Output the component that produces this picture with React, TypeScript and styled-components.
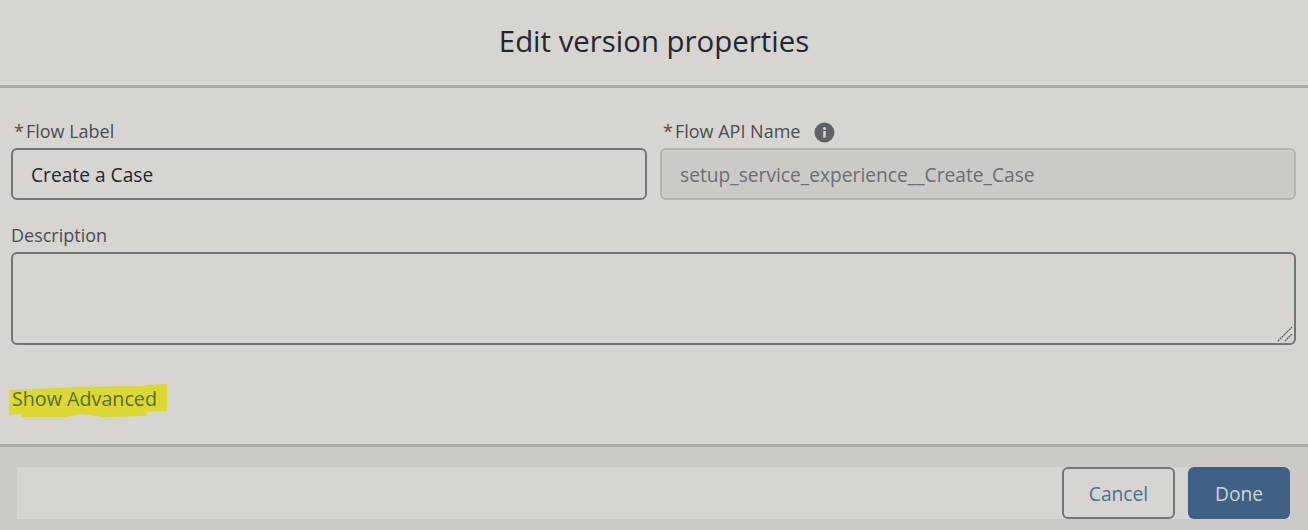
import styled, { createGlobalStyle } from "styled-components";

const GlobalStyle = createGlobalStyle`
    html, body {
        margin: 0;
        padding: 0;
        background-color: #d6d5d1;
    }
    body {
        font-family: "Open Sans", "Liberation Sans", sans-serif;
    }
`;

const Modal = styled.div`
    width: 1308px;
    height: 530px;
    display: flex;
    flex-direction: column;
    overflow: hidden;
    background-color: #d6d5d1;
`;

const Header = styled.header`
    height: 85px;
    flex-shrink: 0;
    box-sizing: content-box;
    display: flex;
    align-items: center;
    justify-content: center;
    border-bottom: 3px solid #aeada5;
`;

const Title = styled.h1`
    margin: 0 0 4px;
    font-size: 29.4px;
    font-weight: 400;
    color: #23262e;
`;

const Body = styled.div`
    height: 356px;
    flex-shrink: 0;
    box-sizing: border-box;
    padding: 30px 12px 0 11px;
    display: flex;
    flex-direction: column;
`;

const Row = styled.div`
    display: flex;
    gap: 13px;
`;

const Field = styled.div`
    flex: 1;
    min-width: 0;
`;

const Label = styled.label<{ $inset?: number }>`
    display: flex;
    align-items: center;
    height: 30px;
    box-sizing: border-box;
    padding: 0 0 4px ${(p) => p.$inset ?? 0}px;
    font-size: 18px;
    color: #4a4d52;
`;

const Star = styled.span`
    margin-right: 2px;
    color: #7a3b3b;
`;

const InfoIcon = styled.svg`
    width: 21px;
    height: 21px;
    margin: 2px 0 0 14px;
`;

const Input = styled.div<{ $disabled?: boolean }>`
    height: 52px;
    box-sizing: border-box;
    display: flex;
    align-items: center;
    padding: 0 18px;
    border-radius: 6px;
    font-size: 19.2px;
    border: ${(p) => (p.$disabled ? "2px solid #b5b4ae" : "2px solid #71767b")};
    background-color: ${(p) => (p.$disabled ? "#cbcac6" : "transparent")};
    color: ${(p) => (p.$disabled ? "#6b6e72" : "#23262e")};
`;

const DescriptionField = styled.div`
    margin-top: 22px;
`;

const TextArea = styled.div`
    position: relative;
    height: 93px;
    box-sizing: border-box;
    border: 2px solid #71767b;
    border-radius: 6px;
`;

const Grip = styled.svg`
    position: absolute;
    right: 1px;
    bottom: 1px;
    width: 16px;
    height: 16px;
`;

const AdvancedLink = styled.a`
    align-self: flex-start;
    margin: 39px 0 0 -2px;
    width: 158px;
    height: 33px;
    box-sizing: border-box;
    padding: 0 0 4px 3px;
    display: flex;
    align-items: center;
    font-size: 19.7px;
    white-space: nowrap;
    color: #55701f;
    background-color: #dbd832;
    clip-path: polygon(0 18%, 29% 12%, 44% 8%, 86% 6%, 86% 3%, 100% 0, 100% 82%, 87% 84%, 87% 97%, 60% 100%, 46% 91%, 36% 100%, 8% 100%, 8% 91%, 0 94%);
`;

const Footer = styled.footer`
    flex: 1;
    box-sizing: border-box;
    border-top: 3px solid #aeada5;
    background-color: #cbcac6;
    padding: 20px 18px 11px 17px;
`;

const ButtonBar = styled.div`
    height: 52px;
    display: flex;
    justify-content: flex-end;
    gap: 13px;
    background-color: #d6d5d1;
`;

const Button = styled.button<{ $primary?: boolean }>`
    height: 52px;
    box-sizing: border-box;
    border-radius: 6px;
    font-family: inherit;
    font-size: 19.2px;
    width: ${(p) => (p.$primary ? "102px" : "113px")};
    border: ${(p) => (p.$primary ? "none" : "2px solid #71767b")};
    background-color: ${(p) => (p.$primary ? "#406086" : "#d6d5d1")};
    color: ${(p) => (p.$primary ? "#cfd3d6" : "#4d6f97")};
`;

function App() {
    return <Modal>
        <GlobalStyle />
        <Header>
            <Title>Edit version properties</Title>
        </Header>
        <Body>
            <Row>
                <Field>
                    <Label $inset={3}><Star>*</Star>Flow Label</Label>
                    <Input>Create a Case</Input>
                </Field>
                <Field>
                    <Label $inset={3}>
                        <Star>*</Star>Flow API Name
                        <InfoIcon viewBox="0 0 21 21">
                            <circle cx="10.5" cy="10.5" r="10" fill="#5f6368" />
                            <rect x="9.2" y="9" width="2.6" height="6.5" fill="#d6d5d1" />
                            <circle cx="10.5" cy="6.5" r="1.5" fill="#d6d5d1" />
                        </InfoIcon>
                    </Label>
                    <Input $disabled>setup_service_experience__Create_Case</Input>
                </Field>
            </Row>
            <DescriptionField>
                <Label>Description</Label>
                <TextArea>
                    <Grip viewBox="0 0 16 16">
                        <path d="M1 15 L15 1 M8 15 L15 8" stroke="#55585c" strokeWidth="1.2" strokeDasharray="2 0.6" fill="none" />
                    </Grip>
                </TextArea>
            </DescriptionField>
            <AdvancedLink>Show Advanced</AdvancedLink>
        </Body>
        <Footer>
            <ButtonBar>
                <Button>Cancel</Button>
                <Button $primary>Done</Button>
            </ButtonBar>
        </Footer>
    </Modal>;
}

export default App;
